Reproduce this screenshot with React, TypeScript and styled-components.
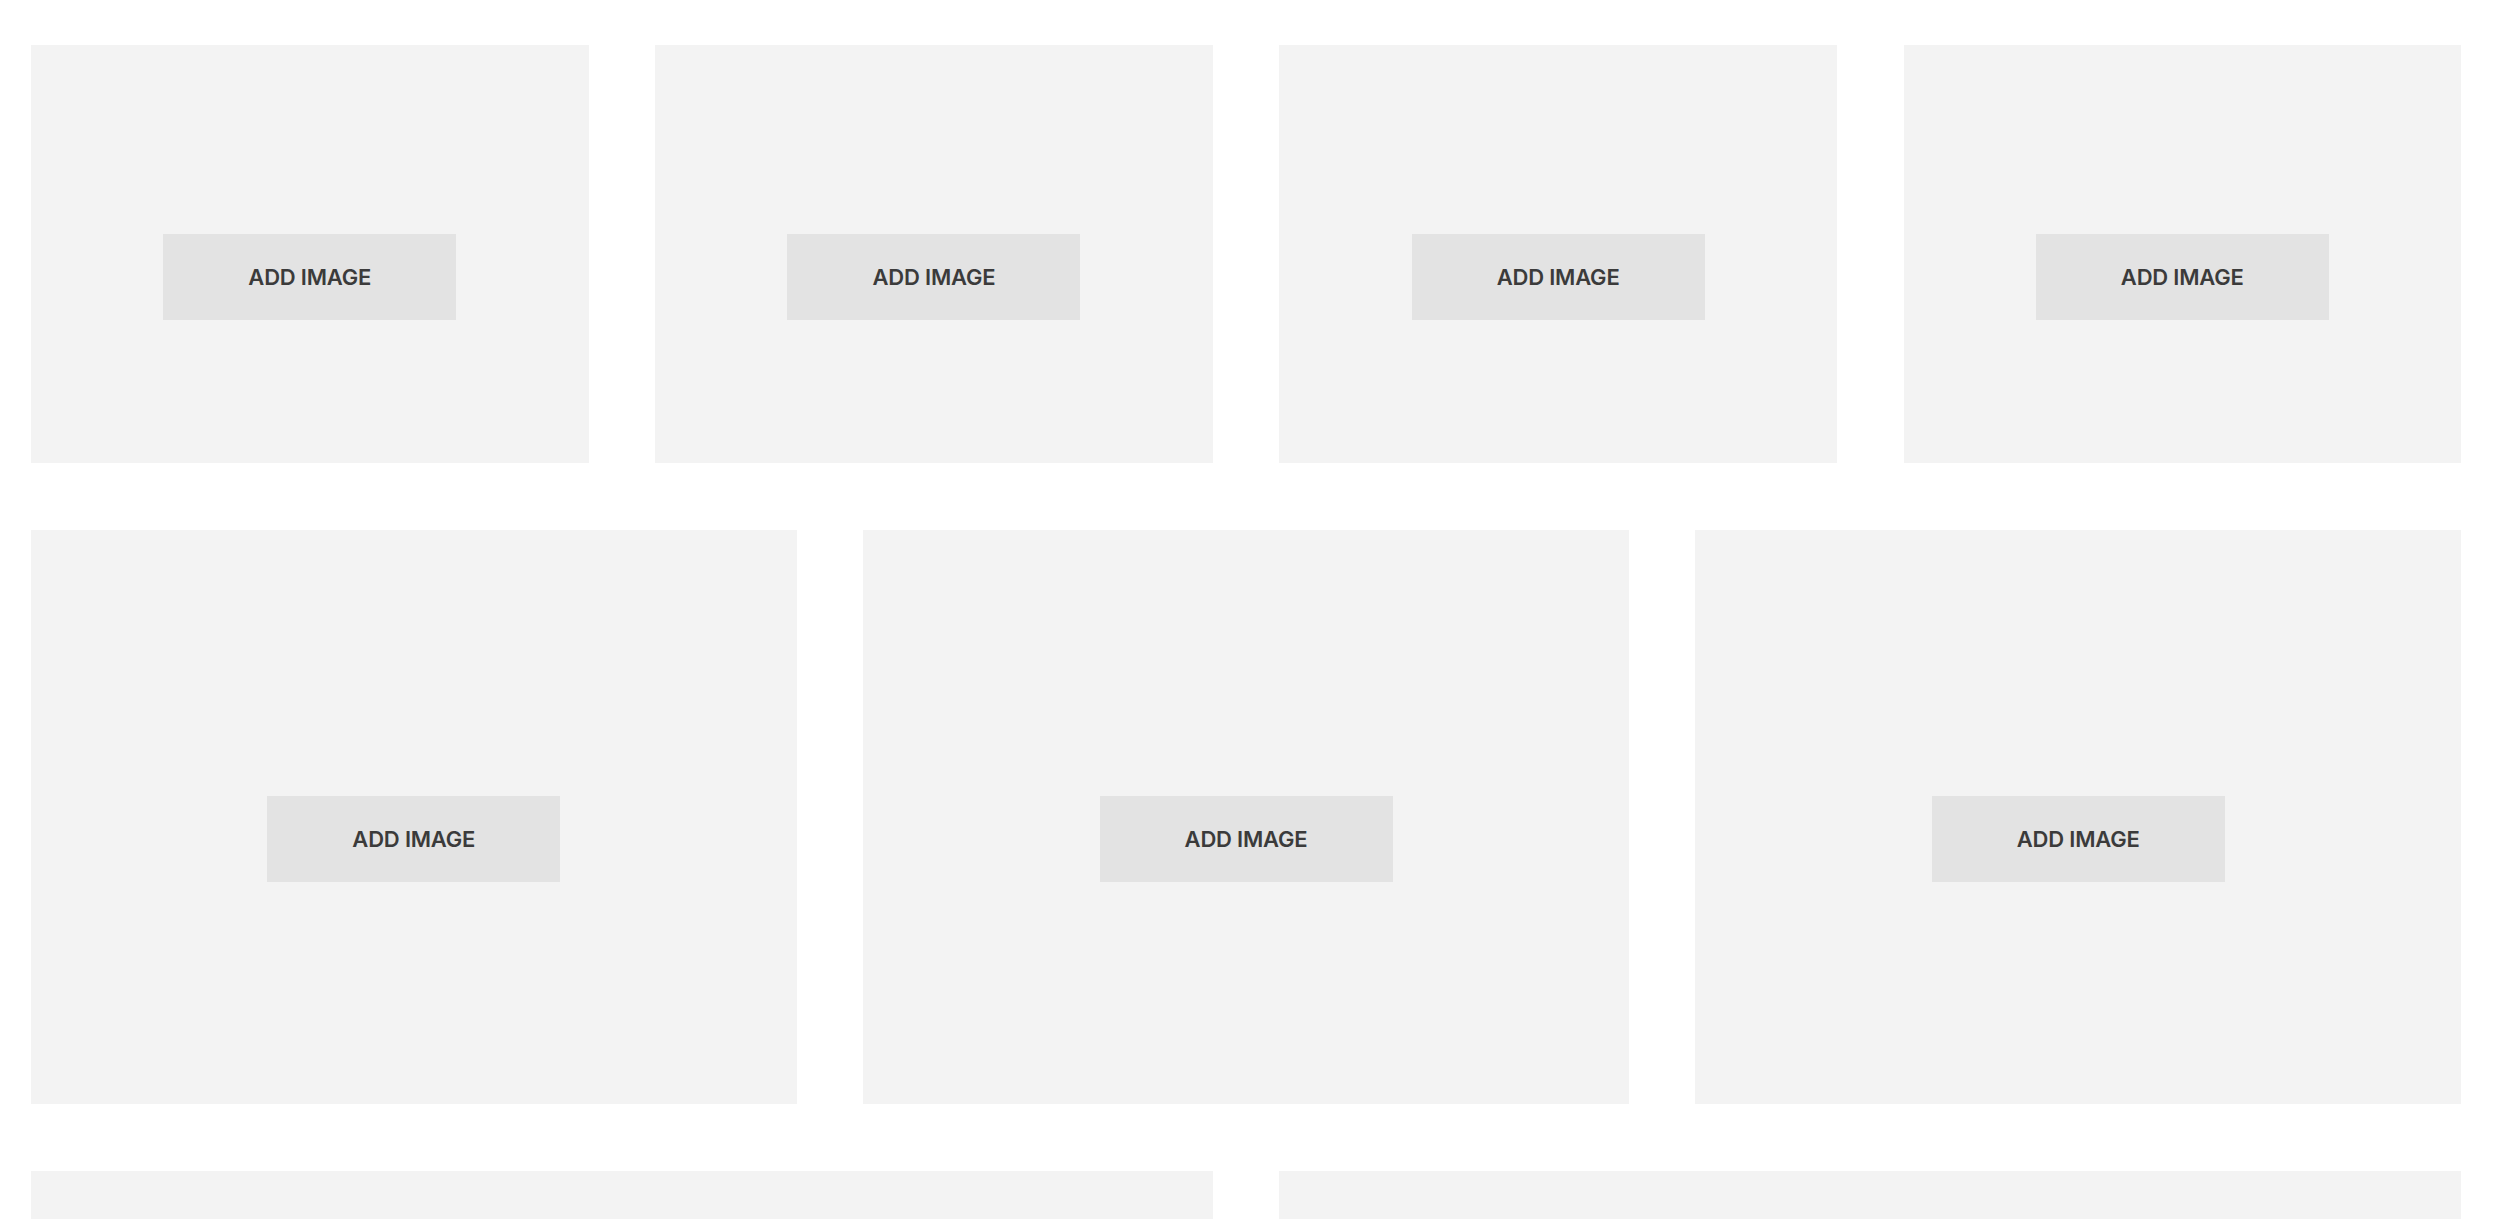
import React from "react";
import styled, { createGlobalStyle } from "styled-components";

const GlobalStyle = createGlobalStyle`
  html, body {
    margin: 0;
    padding: 0;
    background: #ffffff;
  }
  body {
    font-family: Inter, "Noto Sans", "Liberation Sans", sans-serif;
  }
  * {
    box-sizing: border-box;
  }
`;

const Gallery = styled.main`
  display: flex;
  flex-direction: column;
  gap: 66.67px;
  padding: 45px 39px 0 31px;
`;

const Row = styled.section`
  display: flex;
  gap: 66.67px;
`;

const Slot = styled.div`
  flex: 1 1 0;
  min-width: 0;
  aspect-ratio: 4 / 3;
  background: #f3f3f3;
  padding-top: 45px;
  display: flex;
  align-items: center;
  justify-content: center;
`;

const AddButton = styled.button`
  width: 293px;
  height: 86px;
  border: none;
  border-radius: 0;
  background: #e3e3e3;
  color: #3b3b3b;
  font-family: Inter, "Noto Sans", "Liberation Sans", sans-serif;
  font-size: 22px;
  font-weight: 600;
  letter-spacing: -0.2px;
  text-transform: uppercase;
  cursor: pointer;
  padding: 0;
`;

const rows = [4, 3, 2];

export default function App() {
  return (
    <>
      <GlobalStyle />
      <Gallery>
        {rows.map((count, r) => (
          <Row key={r}>
            {Array.from({ length: count }).map((_, i) => (
              <Slot key={i}>
                <AddButton type="button">Add image</AddButton>
              </Slot>
            ))}
          </Row>
        ))}
      </Gallery>
    </>
  );
}
